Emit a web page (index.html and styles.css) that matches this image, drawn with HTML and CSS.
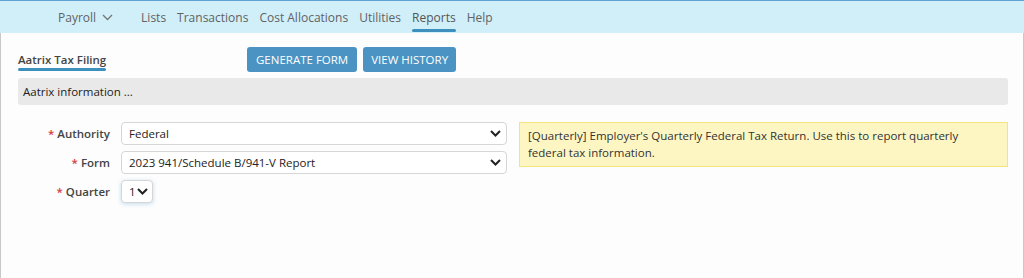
FILE: index.html
```html
<!doctype html>
<html lang="en">
<head>
  <meta charset="UTF-8">
  <title>Aatrix Tax Filing</title>
  <link rel="stylesheet" href="styles.css">
</head>
<body>
  <nav class="topnav">
    <a class="topnav--item topnav--menu">Payroll
      <svg width="11" height="7" viewBox="0 0 11 7"><path d="M1 1l4.5 4.5L10 1" fill="none" stroke="#777" stroke-width="1.4"/></svg>
    </a>
    <a class="topnav--item topnav--spaced">Lists</a>
    <a class="topnav--item">Transactions</a>
    <a class="topnav--item">Cost Allocations</a>
    <a class="topnav--item">Utilities</a>
    <a class="topnav--item topnav--item__active">Reports</a>
    <a class="topnav--item">Help</a>
  </nav>

  <main class="page">
    <header class="page--head">
      <h1 class="page--title">Aatrix Tax Filing</h1>
      <div class="page--actions">
        <button class="btn">Generate Form</button>
        <button class="btn">View History</button>
      </div>
    </header>

    <div class="info">Aatrix information ...</div>

    <section class="filing">
      <div class="filing--fields">
        <label class="filing--label" for="authority"><span class="req">*</span> Authority</label>
        <div class="select">
          <select id="authority"><option>Federal</option></select>
          <svg class="select--arrow" width="11" height="7" viewBox="0 0 11 7"><path d="M1 1l4.5 4.5L10 1" fill="none" stroke="#222" stroke-width="2"/></svg>
        </div>

        <label class="filing--label" for="form"><span class="req">*</span> Form</label>
        <div class="select">
          <select id="form"><option>2023 941/Schedule B/941-V Report</option></select>
          <svg class="select--arrow" width="11" height="7" viewBox="0 0 11 7"><path d="M1 1l4.5 4.5L10 1" fill="none" stroke="#222" stroke-width="2"/></svg>
        </div>

        <label class="filing--label" for="quarter"><span class="req">*</span> Quarter</label>
        <div class="select select__small">
          <select id="quarter"><option>1</option><option>2</option><option>3</option><option>4</option></select>
          <svg class="select--arrow" width="11" height="7" viewBox="0 0 11 7"><path d="M1 1l4.5 4.5L10 1" fill="none" stroke="#222" stroke-width="2"/></svg>
        </div>
      </div>

      <p class="note">[Quarterly] Employer's Quarterly Federal Tax Return. Use this to report quarterly federal tax information.</p>
    </section>
  </main>
</body>
</html>
```
FILE: styles.css
```css
* {
  box-sizing: border-box;
}

html,
body {
  height: 100%;
}

body {
  margin: 0;
  background-color: #fdfdfd;
  font-family: "Open Sans", "Noto Sans", sans-serif;
  font-size: 11.5px;
  color: #333;
  display: flex;
  flex-direction: column;
}

.topnav {
  display: flex;
  align-items: center;
  gap: 11px;
  height: 33px;
  padding-left: 58px;
  border-top: 1px solid #5da4d3;
  background-color: #d0eff9;
}

.topnav--item {
  position: relative;
  display: flex;
  align-items: center;
  gap: 6px;
  font-size: 12px;
  font-weight: 500;
  color: #626262;
  cursor: pointer;
}

.topnav--spaced {
  margin-left: 17px;
}

.topnav--item__active {
  color: #555;
}

.topnav--item__active::after {
  content: "";
  position: absolute;
  left: 0;
  right: 0;
  bottom: -6px;
  height: 3px;
  border-radius: 2px;
  background-color: #3d8fbe;
}

.page {
  flex-grow: 1;
  padding: 14px 15px 0 17px;
  border-left: 1px solid #c8c8c8;
  border-right: 1px solid #c8c8c8;
}

.page--head {
  display: flex;
  align-items: center;
}

.page--title {
  width: 229px;
  margin: 3px 0 0;
  font-size: 11.5px;
  font-weight: 600;
  color: #444;
}

.page--title::after {
  content: "";
  display: block;
  width: 88px;
  height: 3px;
  margin-top: 1px;
  border-radius: 2px;
  background-color: #3d8fbe;
}

.page--actions {
  display: flex;
  gap: 6px;
}

.btn {
  height: 25px;
  padding: 0 9px;
  border: 0;
  border-radius: 3px;
  background-color: #4a93c2;
  color: #fff;
  font-family: inherit;
  font-size: 11.5px;
  text-transform: uppercase;
  cursor: pointer;
}

.btn + .btn {
  padding: 0 8px;
}

.info {
  height: 27px;
  margin-top: 6px;
  padding: 0 5px;
  display: flex;
  align-items: center;
  border-radius: 3px;
  background-color: #e9e9e9;
  color: #222;
}

.filing {
  display: flex;
  align-items: flex-start;
  gap: 12px;
  margin-top: 17px;
}

.filing--fields {
  display: grid;
  grid-template-columns: 92px 386px;
  column-gap: 11px;
  row-gap: 6px;
  align-items: center;
}

.filing--label {
  text-align: right;
  font-weight: 600;
  font-size: 11.5px;
  color: #444;
}

.req {
  color: #d63a3a;
}

.select {
  position: relative;
  height: 23px;
}

.select select {
  appearance: none;
  width: 100%;
  height: 100%;
  padding: 0 24px 0 7px;
  border: 1px solid #d6d6d6;
  border-radius: 4px;
  background-color: #fff;
  font-family: inherit;
  font-size: 11.5px;
  color: #222;
}

.select--arrow {
  position: absolute;
  right: 6px;
  top: 8px;
  pointer-events: none;
}

.select__small {
  width: 32px;
}

.select__small select {
  padding-right: 0;
  box-shadow: 0 1px 4px rgba(120, 180, 220, .45);
}

.select__small .select--arrow {
  right: 5px;
}

.note {
  flex-grow: 1;
  margin: 0;
  padding: 4px 8px 5px;
  border: 1px solid #f4e47e;
  background-color: #fdf6c3;
  line-height: 17px;
  color: #333;
}
```
